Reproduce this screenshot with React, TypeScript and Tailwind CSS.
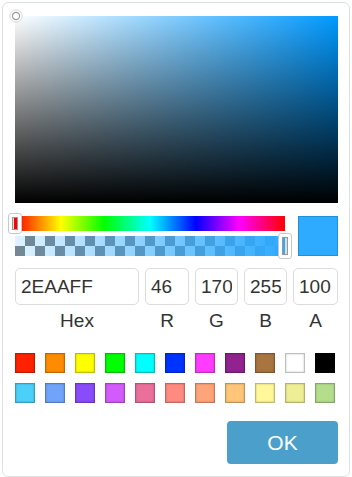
import React from 'react';

const row1 = ['#ff2200', '#ff8c00', '#ffff00', '#00ff00', '#00ffff', '#0033ff', '#ff3cff', '#912290', '#a87540', '#ffffff', '#000000'];
const row2 = ['#4bd0fa', '#70a4fb', '#8a4bfb', '#d35bfb', '#ea709b', '#ff8a80', '#ffa37a', '#ffc67a', '#fff799', '#eeef94', '#b4de8c'];

const fields = [
  { label: 'Hex', value: '2EAAFF', w: 'w-[124px]' },
  { label: 'R', value: '46', w: 'w-[44px]' },
  { label: 'G', value: '170', w: 'w-[43px]' },
  { label: 'B', value: '255', w: 'w-[43px]' },
  { label: 'A', value: '100', w: 'w-[45px]' },
];

function Swatch({ color }: { color: string }) {
  return (
    <div
      className="w-[20px] h-[20px] border border-black/25 shadow-[inset_0_0_2px_rgba(0,0,0,0.25)]"
      style={{ backgroundColor: color }}
    />
  );
}

export default function App() {
  return (
    <div className="w-[352px] h-[477px] bg-white pt-[2px] pl-[2px] font-['Liberation_Sans',Arial,sans-serif] text-[#333]">
      <div className="relative w-[348px] h-[475px] border border-[#dce1e1] rounded-[6px] pt-[13px] pl-[12px] pr-[11px] flex flex-col">
        {/* close / reset toggle */}
        <svg className="absolute left-[6px] top-[6px]" width="14" height="14" viewBox="0 0 14 14">
          <circle cx="7" cy="7" r="6.2" fill="white" stroke="#d6d6d6" strokeWidth="1" />
          <circle cx="7" cy="7" r="3.6" fill="white" stroke="#9a9a9a" strokeWidth="1.2" />
        </svg>

        {/* saturation / value */}
        <div className="w-[323px] h-[187px] bg-[linear-gradient(to_right,#fff,#0099ff)]">
          <div className="w-full h-full bg-[linear-gradient(to_top,#000,transparent)]" />
        </div>

        {/* hue, alpha, preview */}
        <div className="flex mt-[13px]">
          <div className="w-[270px] flex flex-col gap-[5px]">
            <div className="relative h-[15px] bg-[linear-gradient(to_right,#f00,#ff0_17%,#0f0_33%,#0ff_50%,#00f_67%,#f0f_83%,#f00)]">
              <div className="absolute left-[-7px] top-[-3px] w-[14px] h-[21px] bg-white border border-[#c8c8c8] rounded-[3px] flex items-center justify-center">
                <div className="w-[6px] h-[13px] border border-[#999] bg-[linear-gradient(to_right,#ddd_30%,#f00_30%)]" />
              </div>
            </div>
            <div className="relative h-[20px] bg-[conic-gradient(#808080_25%,#fff_0_50%,#808080_0_75%,#fff_0)] bg-[length:20px_20px]">
              <div className="w-full h-full bg-[linear-gradient(to_right,rgba(46,170,255,0.15),#2eaaff)]" />
              <div className="absolute right-[-7px] top-[-3px] w-[14px] h-[26px] bg-white border border-[#c8c8c8] rounded-[3px] flex items-center justify-center">
                <div className="w-[6px] h-[18px] border border-[#999] bg-[linear-gradient(to_right,#2eaaff_55%,#ddd_55%)]" />
              </div>
            </div>
          </div>
          <div className="ml-[13px] w-[40px] h-[40px] bg-[#2eaaff] border border-[#2090dc]" />
        </div>

        {/* inputs */}
        <div className="flex gap-[6px] mt-[12px]">
          {fields.map((f) => (
            <div key={f.label} className={`${f.w} flex flex-col items-center`}>
              <input
                readOnly
                value={f.value}
                className="w-full h-[37px] border border-[#dcdcdc] rounded-[5px] px-[5px] text-[19px] text-[#333] outline-none bg-white"
              />
              <div className="mt-[5px] text-[19px] leading-[22px] text-[#333]">{f.label}</div>
            </div>
          ))}
        </div>

        {/* preset swatches */}
        <div className="mt-[21px] flex flex-col gap-[10px]">
          <div className="flex gap-[10px]">
            {row1.map((c) => (
              <Swatch key={c} color={c} />
            ))}
          </div>
          <div className="flex gap-[10px]">
            {row2.map((c) => (
              <Swatch key={c} color={c} />
            ))}
          </div>
        </div>

        <button className="self-end mt-[18px] w-[111px] h-[43px] rounded-[4px] bg-[#4a9fcb] text-white text-[21px]">
          OK
        </button>
      </div>
    </div>
  );
}
